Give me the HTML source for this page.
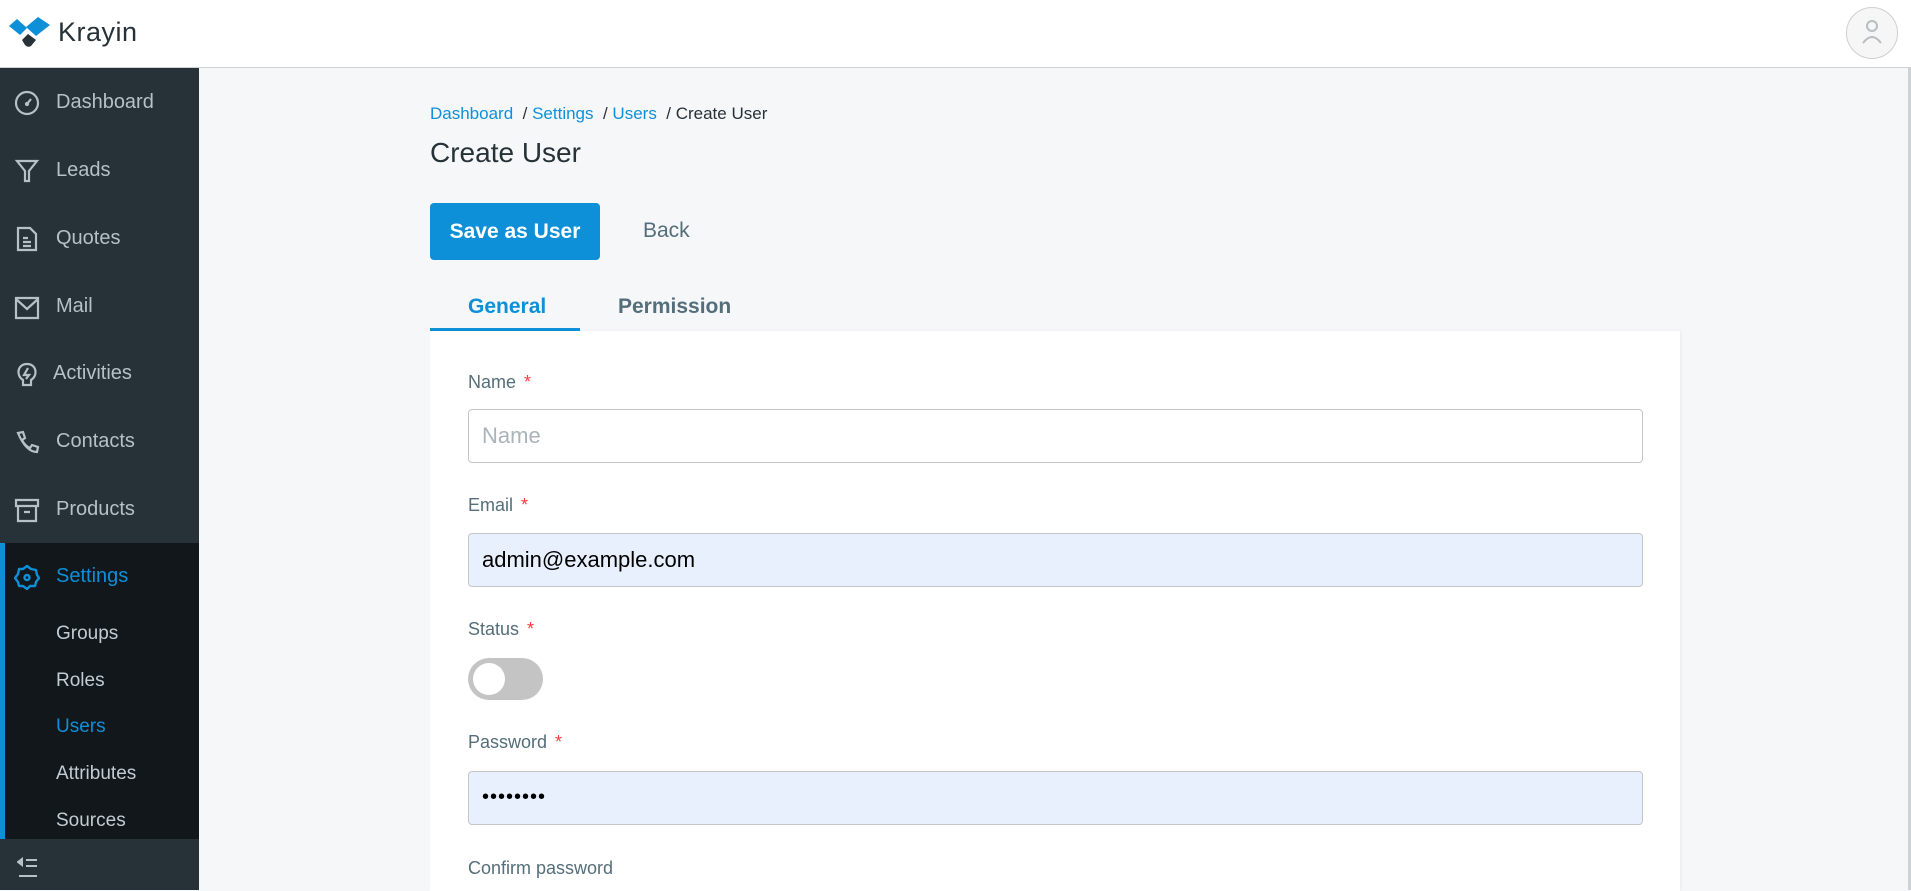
<!DOCTYPE html>
<html><head><meta charset="utf-8"><style>
*{box-sizing:border-box;margin:0;padding:0}
body{width:1911px;height:890px;overflow:hidden;background:#f6f7f9;font-family:"Liberation Sans",Arial,sans-serif;position:relative}
.a{position:absolute}
.hdr{left:0;top:0;width:1911px;height:68px;background:#fff;border-bottom:1px solid #cfd2d5}
.sb{left:0;top:68px;width:199px;height:822px;background:#263238}
.ni{position:absolute;left:56px;font-size:20px;color:#b5c0c7;line-height:24px}
.ic{position:absolute;left:14px;width:26px;height:26px}
.sub{position:absolute;left:56px;font-size:19px;color:#c3ccd2;line-height:22px}
.lbl{position:absolute;left:468px;font-size:18px;color:#546e7a}
.lbl b{color:#ff3b3b;font-weight:normal;margin-left:8px}
.inp{position:absolute;left:468px;width:1175px;height:54px;border:1.5px solid #c5c5c5;border-radius:4px;font-family:Arial,"Liberation Sans",sans-serif;font-size:22px;padding-left:13px;line-height:51px;color:#000}
</style></head><body>
<div class="a hdr"></div>
<svg class="a" style="left:0;top:0" width="60" height="60" viewBox="0 0 60 60"><path d="M9 26 L17 19 L27 28 L20 35Z" fill="#0e90d9"/><path d="M26 27 L38 17 L50 25 L36 36Z" fill="#0e90d9"/><path d="M22 40 L28 34 L36 40 L31 46 Q28 48 25 45Z" fill="#263238"/></svg>
<div class="a" style="left:58px;top:17px;font-size:27px;color:#263238;letter-spacing:0.5px">Krayin</div>
<div class="a" style="left:1846px;top:7px;width:52px;height:52px;border:1px solid #cfcfcf;border-radius:50%;background:#f6f6f6"></div>
<svg class="a" style="left:1859px;top:18px" width="26" height="28" viewBox="0 0 26 28"><circle cx="13" cy="8" r="5" fill="none" stroke="#b9bdbf" stroke-width="2"/><path d="M4 25 Q13 13 22 25" fill="none" stroke="#b9bdbf" stroke-width="2"/></svg>
<div class="a" style="left:1908px;top:68px;width:3px;height:822px;background:#cfd2d5"></div>

<div class="a sb"></div>
<div class="a" style="left:0;top:543px;width:199px;height:296px;background:#11171b"></div>
<div class="a" style="left:0;top:543px;width:5px;height:296px;background:#0e90d9"></div>
<svg class="ic" style="top:90px" viewBox="0 0 26 26" fill="none" stroke="#b5c0c7" stroke-width="2.2"><circle cx="13" cy="13" r="11"/><path d="M13 14 L17 9"/><circle cx="13" cy="14" r="1"/></svg>
<div class="ni" style="top:90px">Dashboard</div>
<svg class="ic" style="top:158px" viewBox="0 0 26 26" fill="none" stroke="#b5c0c7" stroke-width="2.2"><path d="M3 3 H23 L15 13 V23 H11 V13Z"/></svg>
<div class="ni" style="top:158px">Leads</div>
<svg class="ic" style="top:226px" viewBox="0 0 26 26" fill="none" stroke="#b5c0c7" stroke-width="2.2"><path d="M4 2 H16 L22 8 V24 H4Z M9 12 H14 M9 16 H17 M9 20 H17"/></svg>
<div class="ni" style="top:226px">Quotes</div>
<svg class="ic" style="top:294px" viewBox="0 0 26 26" fill="none" stroke="#b5c0c7" stroke-width="2.2"><path d="M2 4 H24 V24 H2Z M2 5 L13 15 L24 5"/></svg>
<div class="ni" style="top:294px">Mail</div>
<svg class="ic" style="top:361px" viewBox="0 0 26 26" fill="none" stroke="#b5c0c7" stroke-width="2.2"><path d="M9 19 C2 15 3 3 13 3 C23 3 24 15 17 19 V24 H9Z M14 7 L10 14 H15 L12 18"/></svg>
<div class="ni" style="left:53px;top:361px">Activities</div>
<svg class="ic" style="top:429px" viewBox="0 0 26 26" fill="none" stroke="#b5c0c7" stroke-width="2.2"><path d="M4 4 L9 3 L11 9 L8 11 Q11 17 16 19 L18 16 L24 18 L23 23 Q12 23 4 4Z"/></svg>
<div class="ni" style="top:429px">Contacts</div>
<svg class="ic" style="top:497px" viewBox="0 0 26 26" fill="none" stroke="#b5c0c7" stroke-width="2.2"><path d="M2 3 H24 V9 H2Z M4 9 V24 H22 V9 M10 15 H16"/></svg>
<div class="ni" style="top:497px">Products</div>
<svg class="ic" style="top:564px" viewBox="0 0 26 26" fill="none" stroke="#0e90d9" stroke-width="2.4" stroke-linejoin="round"><path d="M13 2 L17 5 L22 6 L23 11 L25 14 L22 18 L21 22 L16 22 L13 25 L9 22 L5 22 L4 18 L1 14 L4 10 L5 5 L9 5Z"/><circle cx="13" cy="13.5" r="2.5"/></svg>
<div class="ni" style="top:564px;color:#0e90d9">Settings</div>
<div class="sub" style="top:623px">Groups</div>
<div class="sub" style="top:670px">Roles</div>
<div class="sub" style="top:716px;color:#0e90d9">Users</div>
<div class="sub" style="top:763px">Attributes</div>
<div class="sub" style="top:810px">Sources</div>
<svg class="a" style="left:17px;top:857px" width="22" height="22" viewBox="0 0 22 22" fill="none" stroke="#b5c0c7" stroke-width="2"><path d="M1 5 L5 2 V8Z" fill="#b5c0c7"/><path d="M9 3 H20 M9 9 H20 M2 19 H20"/></svg>

<div class="a" style="left:430px;top:104px;font-size:17px;color:#0e90d9;white-space:pre">Dashboard  <span style="color:#333">/</span> Settings  <span style="color:#333">/</span> Users  <span style="color:#263238">/ Create User</span></div>
<div class="a" style="left:430px;top:137px;font-size:28px;color:#263238">Create User</div>
<div class="a" style="left:430px;top:203px;width:170px;height:57px;background:#0e90d9;border-radius:4px;color:#fff;font-weight:bold;font-size:21px;line-height:57px;text-align:center">Save as User</div>
<div class="a" style="left:643px;top:219px;font-size:21px;color:#546e7a">Back</div>
<div class="a" style="left:468px;top:295px;font-size:21px;font-weight:bold;color:#0e90d9">General</div>
<div class="a" style="left:618px;top:295px;font-size:21px;font-weight:bold;color:#546e7a">Permission</div>
<div class="a" style="left:430px;top:328px;width:150px;height:3px;background:#0e90d9"></div>
<div class="a" style="left:430px;top:331px;width:1250px;height:560px;background:#fff;box-shadow:1px 0 3px rgba(0,0,0,0.06)"></div>

<div class="lbl" style="top:372px">Name<b>*</b></div>
<div class="inp" style="top:409px;background:#fff;color:#a9b4ba">Name</div>
<div class="lbl" style="top:495px">Email<b>*</b></div>
<div class="inp" style="top:533px;background:#e8f0fe">admin@example.com</div>
<div class="lbl" style="top:619px">Status<b>*</b></div>
<div class="a" style="left:468px;top:658px;width:75px;height:42px;border-radius:21px;background:#c4c4c4"></div>
<div class="a" style="left:473px;top:663px;width:32px;height:32px;border-radius:50%;background:#fff"></div>
<div class="lbl" style="top:732px">Password<b>*</b></div>
<div class="inp" style="top:771px;background:#e8f0fe;font-size:20px;letter-spacing:1px">••••••••</div>
<div class="lbl" style="top:858px">Confirm password</div>
</body></html>
